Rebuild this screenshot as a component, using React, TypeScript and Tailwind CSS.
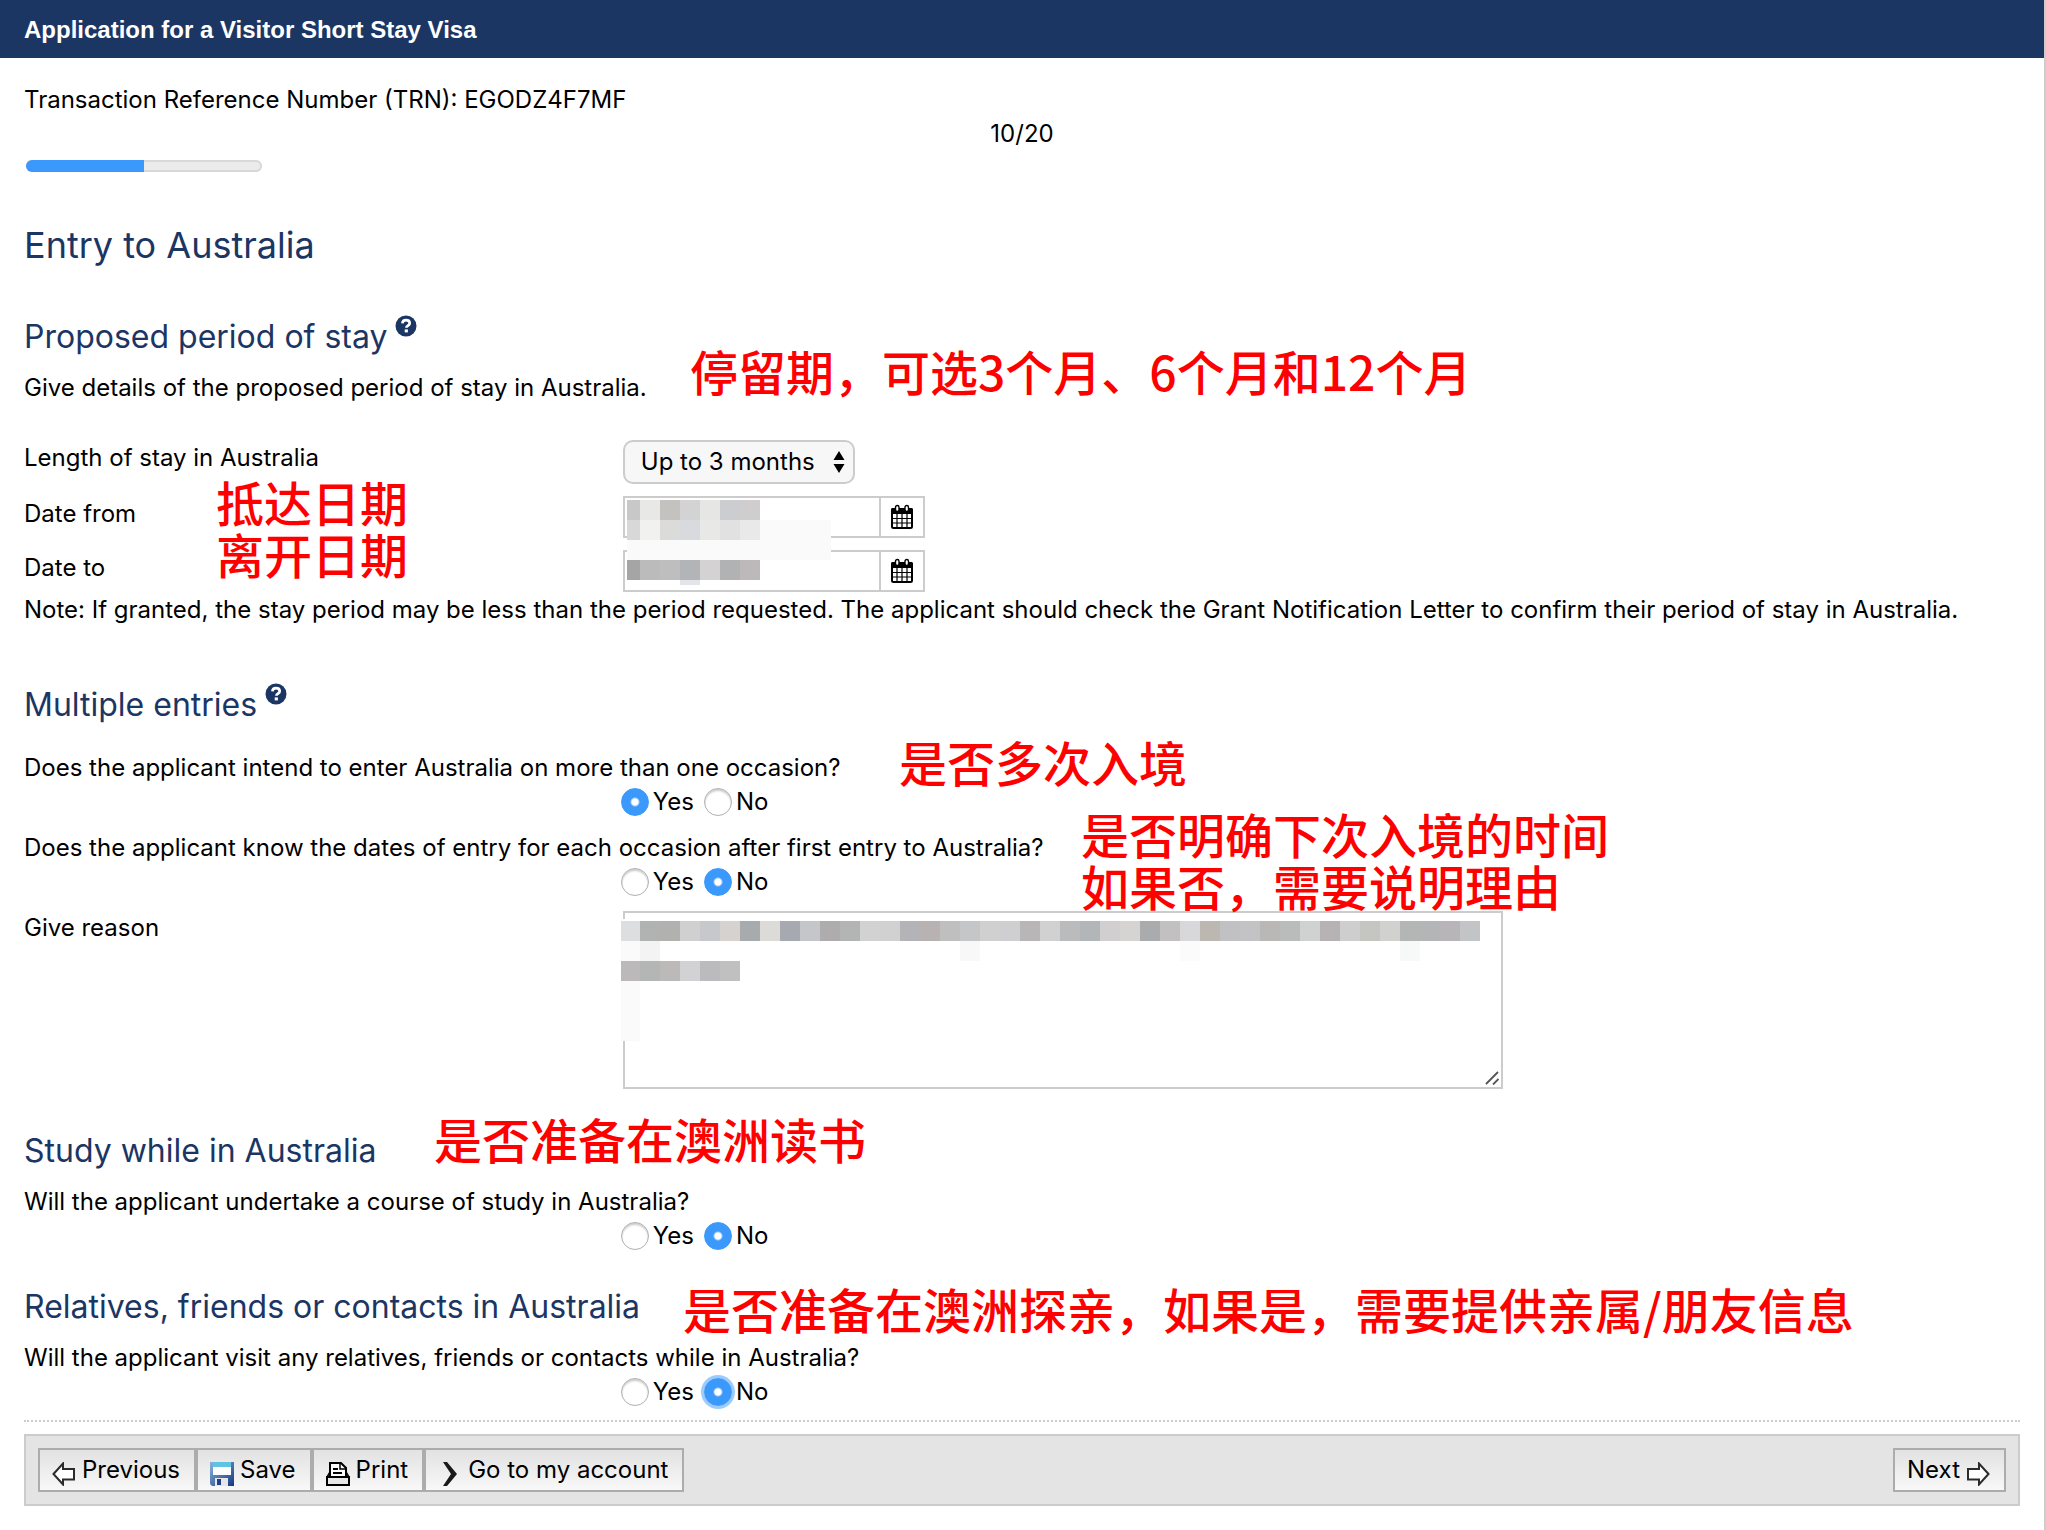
import { useState } from 'react';
import type { ReactNode } from 'react';

interface Cell {
    x: number;
    y: number;
    w: number;
    h: number;
    fill: string;
}

const CELL = 20;

// Builds one row of blurred-out cells, the first one may be narrower
function row(x: number, y: number, first: number, colors: string[]): Cell[] {
    return colors.map((fill, i) => ({
        x: i === 0 ? x : x + first + (i - 1) * CELL,
        y,
        w: i === 0 ? first : CELL,
        h: CELL,
        fill
    }));
}

const dateCells: Cell[] = [
    ...row(0, 0, 13, ['#c8c8c8', '#e8e8e6', '#c3c2bf', '#d3d3d4', '#e6e6e5', '#cccdd0', '#d0cdce']),
    ...row(0, 20, 13, ['#d8d8d8', '#f1f1ef', '#dbdbd9', '#d9dadd', '#e8e8e7', '#e1e1e1', '#e9e9e9']),
    { x: 133, y: 20, w: 71, h: 20, fill: '#fafafa' },
    { x: 0, y: 40, w: 204, h: 20, fill: '#fafafa' },
    ...row(0, 60, 13, ['#a5a5a5', '#bbbbbb', '#bebebe', '#b3b4b7', '#d5d2d3', '#b0b2b4', '#bdb8ba']),
    { x: 53, y: 80, w: 20, h: 5, fill: '#e3e4e7' }
];

const reasonCells: Cell[] = [
    { x: 0, y: 0, w: 4, h: 122, fill: '#ffffff' },
    ...row(0, 2, 19, [
        '#dcdee0', '#b0b3b2', '#b1b1b0', '#d0d0d0', '#c6c8cb', '#d6d2cf', '#a7abae', '#dcdbd7', '#a6a9b0',
        '#c5c6c9', '#afacad', '#b3b5b4', '#d2d2d2', '#d1d1d1', '#b4b3b7', '#b8b3b2', '#bfbfbf', '#c5c6c8',
        '#d0d0d0', '#cfcfd1', '#b9b6b7', '#d1d1d1', '#b9bbbc', '#b3b6b8', '#d1cfd0', '#d5d4d2', '#a9abac',
        '#c3c0c1', '#d8d8da', '#bcb7b1', '#c1c1c3', '#c3c3c5', '#bab8b6', '#babcbb', '#d0d2d1', '#b7b3b5',
        '#cecece', '#c5c5c2', '#d1d1cf', '#b4b5b5', '#b4b5b7', '#b7b5b8', '#c3c4c6'
    ]),
    { x: 0, y: 22, w: 19, h: 20, fill: '#fafafa' },
    { x: 19, y: 22, w: 20, h: 20, fill: '#f3f3f3' },
    { x: 339, y: 22, w: 20, h: 20, fill: '#f8f8f8' },
    { x: 559, y: 22, w: 20, h: 20, fill: '#fbfbfb' },
    { x: 779, y: 22, w: 20, h: 20, fill: '#f7f9f8' },
    ...row(0, 42, 19, ['#bcb9ba', '#b4b6b6', '#bbbab8', '#d2d2d4', '#bbbbbd', '#c0c0c0']),
    { x: 0, y: 62, w: 19, h: 60, fill: '#fafafa' }
];

function Mosaic({ cells, width, height, className }: { cells: Cell[]; width: number; height: number; className: string }) {
    return (
        <svg width={width} height={height} shapeRendering="crispEdges" aria-hidden="true" className={`absolute pointer-events-none ${className}`}>
            {cells.map((c, i) => (
                <rect key={i} x={c.x} y={c.y} width={c.w} height={c.h} fill={c.fill} />
            ))}
        </svg>
    );
}

function HelpIcon() {
    return (
        <svg width="22" height="22" viewBox="0 0 22 22" fill="none">
            <circle cx="11" cy="11" r="10.5" fill="#1c3664" />
            <path d="M7.4 8.4C7.6 6.2 9 5.2 11 5.2c2.200 0 3.700 1.200 3.700 3 0 2.500-3.300 2.400-3.300 4.600" stroke="#fff" strokeWidth="2.700" />
            <rect x="9.700" y="14.400" width="3.200" height="3" fill="#fff" />
        </svg>
    );
}

function CalendarIcon() {
    return (
        <svg width="24" height="26" viewBox="0 0 24 26" fill="none">
            <rect x="2" y="5" width="20" height="19" rx="1.500" stroke="#000" strokeWidth="2" />
            <path d="M1 5.500Q1 4 2.500 4h19Q23 4 23 5.500V10H1z" fill="#000" />
            <path d="M7 10v14M12 10v14M17 10v14M2 14.500h20M2 19h20" stroke="#000" strokeWidth="1.200" />
            <rect x="5.500" y="1.500" width="3.500" height="6" rx="1.700" fill="#fff" stroke="#000" strokeWidth="1.400" />
            <rect x="15" y="1.500" width="3.500" height="6" rx="1.700" fill="#fff" stroke="#000" strokeWidth="1.400" />
        </svg>
    );
}

function ArrowIcon({ right = false }: { right?: boolean }) {
    return (
        <svg width="24" height="24" viewBox="0 0 24 24" className={right ? 'mt-2 -scale-x-100' : 'mt-2'}>
            <path d="M1.500 12 11 1.500v5.500h11v10.500H11V22.500z" fill="#fff" stroke="#2b2b2b" strokeWidth="2" />
        </svg>
    );
}

function SaveIcon() {
    return (
        <svg width="24" height="24" viewBox="0 0 24 24" className="mt-2">
            <defs>
                <linearGradient id="disk" x1="0" y1="0" x2="1" y2="1">
                    <stop offset="0" stopColor="#8db4dc" />
                    <stop offset="1" stopColor="#123a80" />
                </linearGradient>
            </defs>
            <path d="M0 0h24v24H2L0 22z" fill="url(#disk)" />
            <rect x="3" y="0" width="18" height="5" fill="#5fc3e4" />
            <rect x="3" y="5" width="18" height="8" fill="#fff" />
            <rect x="5" y="16" width="13" height="8" fill="#e6e6ea" />
            <rect x="7" y="17" width="4" height="6" fill="#1f3f86" />
        </svg>
    );
}

function PrintIcon() {
    return (
        <svg width="24" height="24" viewBox="0 0 24 24" fill="none" className="mt-2">
            <path d="M4 14V1h11l5 5v8" fill="#fff" stroke="#000" strokeWidth="2" />
            <path d="M14 1v6h6" stroke="#000" strokeWidth="1.500" />
            <path d="M7 7h5M7 11h9" stroke="#000" strokeWidth="1.800" />
            <path d="M4 10 1 15h22l-3-5" stroke="#000" strokeWidth="1.500" />
            <rect x="1" y="15" width="22" height="8" fill="#e8e8e8" stroke="#000" strokeWidth="2" />
        </svg>
    );
}

function ChevronIcon() {
    return (
        <svg width="24" height="24" viewBox="0 0 24 24" className="mt-2">
            <path d="M5 0h4l10 12L9 24H5l8-12z" fill="#1a1a1a" />
        </svg>
    );
}

function SectionTitle({ children, help = false }: { children: ReactNode; help?: boolean }) {
    return (
        <div className="flex gap-2 text-[#1c3664]">
            <h2 className="text-[32px] leading-10">{children}</h2>
            {help && (
                <button type="button" aria-label="Help" className="-mt-0.5 self-start">
                    <HelpIcon />
                </button>
            )}
        </div>
    );
}

function Annotation({ children, className }: { children: ReactNode; className: string }) {
    return (
        <p className={`absolute whitespace-nowrap pointer-events-none text-[48px] leading-[52px] font-medium text-[#ff0000] font-['Noto_Sans_CJK_SC',sans-serif] ${className}`}>
            {children}
        </p>
    );
}

function YesNo({ name, question, initial, focused = false }: { name: string; question: string; initial: 'Yes' | 'No'; focused?: boolean }) {
    const [value, setValue] = useState<string>(initial);

    return (
        <fieldset>
            <legend>{question}</legend>
            <div className="ml-[30%] flex gap-3">
                {['Yes', 'No'].map((option) => (
                    <label key={option} className="-ml-0.5 flex items-center gap-1">
                        <input
                            type="radio"
                            name={name}
                            value={option}
                            checked={value === option}
                            autoFocus={focused && option === initial}
                            onChange={() => setValue(option)}
                            className="size-7 appearance-none rounded-full border border-[#b0b0b0] bg-white shadow-[inset_0_2px_2px_rgba(0,0,0,0.2)] outline-none checked:border-[#3b99fc] checked:bg-[radial-gradient(circle,#fff_3px,#3b99fc_5px)] checked:shadow-none focus:ring-3 focus:ring-[#9ccbfd]"
                        />
                        {option}
                    </label>
                ))}
            </div>
        </fieldset>
    );
}

function DateField({ id, label }: { id: string; label: string }) {
    return (
        <div className="mt-3 grid grid-cols-[30%_1fr]">
            <label htmlFor={id} className="pt-px">{label}</label>
            <div className="flex h-[42px] w-[302px] border-2 border-[#ccc]">
                <input id={id} type="text" className="min-w-0 flex-1 px-2 outline-none" />
                <button type="button" aria-label={`Choose ${label}`} className="flex w-11 items-center justify-center border-l-2 border-[#ccc]">
                    <CalendarIcon />
                </button>
            </div>
        </div>
    );
}

function BarButton({ children }: { children: ReactNode }) {
    return (
        <button type="button" className="flex h-11 items-center gap-1.5 border-2 border-[#acacac] bg-linear-to-b from-[#e2e2e2] to-[#f8f8f8] pr-3.5 pl-3">
            {children}
        </button>
    );
}

export default function App() {
    return (
        <div className="min-h-screen border-r-2 border-[#ccc] bg-white pb-6 font-[Inter,sans-serif] text-2xl leading-[34px] text-black">
            <header className="bg-[#1c3664] px-6 pt-[13px] pb-[11px] font-['Liberation_Sans',sans-serif] font-bold text-white">
                Application for a Visitor Short Stay Visa
            </header>

            <main className="px-6 pt-[25px]">
                <p>Transaction Reference Number (TRN): EGODZ4F7MF</p>
                <p className="text-center">10/20</p>
                <div
                    role="progressbar"
                    aria-label="Application progress"
                    aria-valuenow={10}
                    aria-valuemax={20}
                    className="mt-[9px] ml-0.5 h-3 w-[236px] overflow-hidden rounded-full bg-[#ebebeb] shadow-[inset_0_0_0_2px_#d8d8d8]"
                >
                    <div className="h-full bg-[#3b99fc]" style={{ width: `${(10 / 20) * 100}%` }} />
                </div>

                <h1 className="mt-[49px] text-4xl leading-[48px] text-[#1c3664]">Entry to Australia</h1>

                {/* Period of stay */}
                <section className="relative mt-12">
                    <SectionTitle help>Proposed period of stay</SectionTitle>
                    <p className="mt-3.5">Give details of the proposed period of stay in Australia.</p>

                    <div className="mt-[35px] grid grid-cols-[30%_1fr]">
                        <label htmlFor="length" className="pt-px">Length of stay in Australia</label>
                        <div className="relative w-[232px]">
                            <select id="length" className="block h-11 w-full appearance-none rounded-[10px] border-2 border-[#ccc] bg-[#f7f7f7] px-4 leading-[34px]">
                                <option>Up to 3 months</option>
                                <option>Up to 6 months</option>
                                <option>Up to 12 months</option>
                            </select>
                            <svg width="12" height="22" viewBox="0 0 12 22" className="pointer-events-none absolute top-[11px] right-2.5">
                                <path d="M6 0l5.500 9h-11zM6 22l5.500-9h-11z" fill="#000" />
                            </svg>
                        </div>
                    </div>

                    <div className="relative">
                        <DateField id="date-from" label="Date from" />
                        <DateField id="date-to" label="Date to" />
                        <Mosaic cells={dateCells} width={204} height={85} className="top-1 left-[30%] ml-1" />
                    </div>
                    <p className="mt-px">
                        Note: If granted, the stay period may be less than the period requested. The applicant should check the Grant Notification Letter to confirm their period of stay in Australia.
                    </p>

                    <Annotation className="top-[27px] left-[666px]">停留期，可选3个月、6个月和12个月</Annotation>
                    <Annotation className="top-[158px] left-48">
                        抵达日期
                        <br />
                        离开日期
                    </Annotation>
                </section>

                {/* Multiple entries */}
                <section className="relative mt-[58px]">
                    <SectionTitle help>Multiple entries</SectionTitle>
                    <div className="mt-[26px] flex flex-col gap-3">
                        <YesNo name="multiple" question="Does the applicant intend to enter Australia on more than one occasion?" initial="Yes" />
                        <YesNo name="dates" question="Does the applicant know the dates of entry for each occasion after first entry to Australia?" initial="No" />
                        <div className="grid grid-cols-[30%_1fr]">
                            <label htmlFor="reason">Give reason</label>
                            <div className="relative w-[880px]">
                                <textarea id="reason" className="block h-[178px] w-full resize-none border-2 border-[#ccc] p-2 outline-none" />
                                <svg width="14" height="14" viewBox="0 0 14 14" className="pointer-events-none absolute right-1 bottom-1">
                                    <path d="M1 13 13 1M8 13.500l5.500-5.500" stroke="#555" strokeWidth="1.800" />
                                </svg>
                                <Mosaic cells={reasonCells} width={859} height={122} className="top-2 -left-0.5" />
                            </div>
                        </div>
                    </div>

                    <Annotation className="top-[50px] left-[875px]">是否多次入境</Annotation>
                    <Annotation className="top-[122px] left-[1057px]">
                        是否明确下次入境的时间
                        <br />
                        如果否，需要说明理由
                    </Annotation>
                </section>

                {/* Study */}
                <section className="relative mt-[42px]">
                    <SectionTitle>Study while in Australia</SectionTitle>
                    <div className="mt-3.5">
                        <YesNo name="study" question="Will the applicant undertake a course of study in Australia?" initial="No" />
                    </div>
                    <Annotation className="-top-[19px] left-[410px]">是否准备在澳洲读书</Annotation>
                </section>

                {/* Relatives */}
                <section className="relative mt-[34px]">
                    <SectionTitle>Relatives, friends or contacts in Australia</SectionTitle>
                    <div className="mt-3.5">
                        <YesNo name="relatives" question="Will the applicant visit any relatives, friends or contacts while in Australia?" initial="No" focused />
                    </div>
                    <Annotation className="-top-[5px] left-[659px]">是否准备在澳洲探亲，如果是，需要提供亲属/朋友信息</Annotation>
                </section>

                <hr className="mt-[11px] border-t-2 border-dotted border-[#ccc]" />

                <div className="mt-3 flex justify-between border-2 border-[#ccc] bg-[#e4e4e4] p-3">
                    <div className="flex">
                        <BarButton><ArrowIcon />Previous</BarButton>
                        <BarButton><SaveIcon />Save</BarButton>
                        <BarButton><PrintIcon />Print</BarButton>
                        <BarButton><ChevronIcon />Go to my account</BarButton>
                    </div>
                    <BarButton>Next<ArrowIcon right /></BarButton>
                </div>
            </main>
        </div>
    );
}
